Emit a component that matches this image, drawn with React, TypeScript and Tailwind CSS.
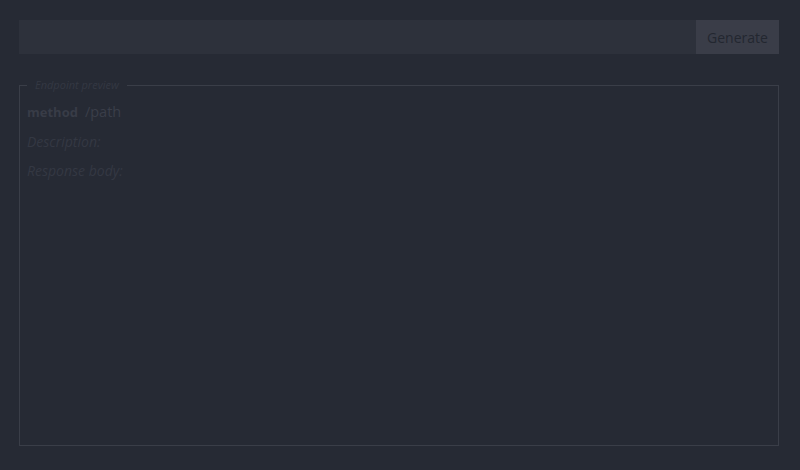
export default function App() {
  return (
    <div
      className="h-[470px] w-full bg-[#262a34] pl-[19px] pr-[21px] pt-[20px]"
      style={{ fontFamily: '"Open Sans", "Noto Sans", sans-serif' }}
    >
      <div className="flex h-[34px]">
        <input
          className="h-full flex-1 bg-[#2d313b] px-2 text-sm text-[#9aa0ab] outline-none"
          type="text"
        />
        <button className="h-full w-[83px] bg-[#3a3d48] text-[14px] text-[#232730]">
          Generate
        </button>
      </div>

      <fieldset className="mt-[24px] h-[368px] border border-[#3a3e48] px-[7px]">
        <legend className="px-[8px] text-[11px] italic leading-[14px] text-[#343843]">
          Endpoint preview
        </legend>
        <div className="mt-[10px] flex items-baseline gap-[7px] leading-[20px]">
          <span className="text-[13px] font-bold text-[#383c47]">method</span>
          <span className="text-[14.5px] text-[#3a3e49]">/path</span>
        </div>
        <p className="mt-[10px] text-[14px] italic leading-[20px] text-[#343843]">Description:</p>
        <p className="mt-[9px] text-[14px] italic leading-[20px] text-[#343843]">Response body:</p>
      </fieldset>
    </div>
  );
}
